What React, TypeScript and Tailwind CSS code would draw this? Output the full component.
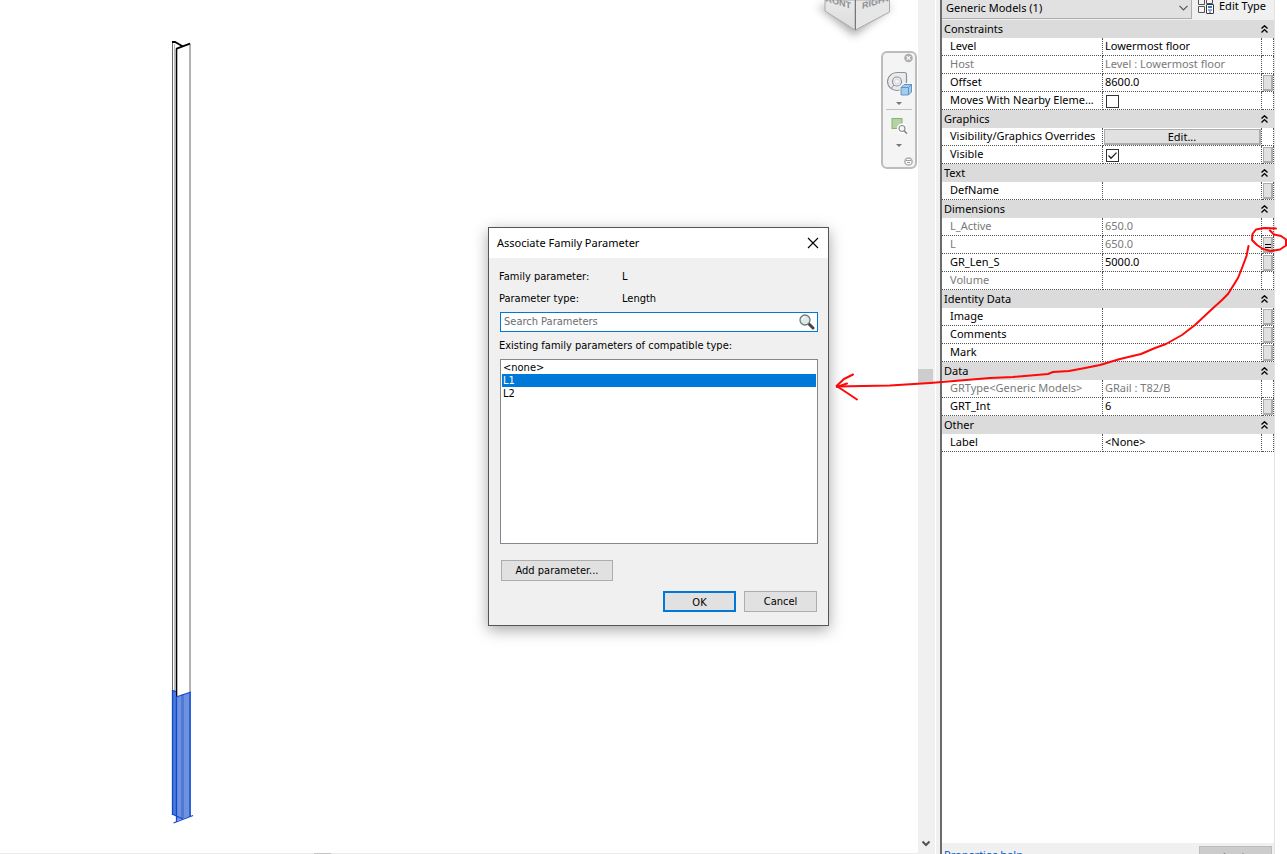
import { useState } from "react";

type Row = {
  name: string;
  value?: string;
  kind?: "text" | "check" | "button";
  checked?: boolean;
  muted?: boolean;
  assoc?: "blank" | "equals";
};

type Group = { title: string; rows: Row[] };

const groups: Group[] = [
  {
    title: "Constraints",
    rows: [
      { name: "Level", value: "Lowermost floor" },
      { name: "Host", value: "Level : Lowermost floor", muted: true },
      { name: "Offset", value: "8600.0", assoc: "blank" },
      { name: "Moves With Nearby Eleme...", kind: "check", checked: false },
    ],
  },
  {
    title: "Graphics",
    rows: [
      { name: "Visibility/Graphics Overrides", value: "Edit...", kind: "button" },
      { name: "Visible", kind: "check", checked: true, assoc: "blank" },
    ],
  },
  { title: "Text", rows: [{ name: "DefName", assoc: "blank" }] },
  {
    title: "Dimensions",
    rows: [
      { name: "L_Active", value: "650.0", muted: true },
      { name: "L", value: "650.0", muted: true, assoc: "equals" },
      { name: "GR_Len_S", value: "5000.0", assoc: "blank" },
      { name: "Volume", muted: true },
    ],
  },
  {
    title: "Identity Data",
    rows: [
      { name: "Image", assoc: "blank" },
      { name: "Comments", assoc: "blank" },
      { name: "Mark", assoc: "blank" },
    ],
  },
  {
    title: "Data",
    rows: [
      { name: "GRType<Generic Models>", value: "GRail : T82/B", muted: true },
      { name: "GRT_Int", value: "6", assoc: "blank" },
    ],
  },
  { title: "Other", rows: [{ name: "Label", value: "<None>" }] },
];

function CollapseIcon() {
  return (
    <svg width="7" height="8" viewBox="0 0 7 8" fill="none" stroke="#000" strokeWidth="1.4">
      <path d="M0.5 3.6 L3.5 0.8 L6.5 3.6 M0.5 7.4 L3.5 4.6 L6.5 7.4" />
    </svg>
  );
}

function PropertyRow({ row }: { row: Row }) {
  const tone = row.muted ? "text-[#7a7a7a]" : "text-black";
  return (
    <tr className="h-[18px]">
      <th
        scope="row"
        className={`border-r border-b border-dotted border-[#555] p-0 pl-2 text-left align-top font-normal whitespace-nowrap ${tone}`}
      >
        {row.name}
      </th>
      <td className={`border-r border-b border-dotted border-[#555] p-0 align-top ${tone}`}>
        {row.kind === "check" ? (
          <span className="flex h-4 items-end pl-[3px]">
            <span className="grid">
              <input
                type="checkbox"
                aria-label={row.name}
                defaultChecked={row.checked}
                className="peer col-start-1 row-start-1 size-[13px] appearance-none border border-[#333] bg-white"
              />
              <svg
                viewBox="0 0 13 13"
                className="pointer-events-none invisible col-start-1 row-start-1 size-[13px] peer-checked:visible"
                fill="none"
                stroke="#222"
                strokeWidth="1.3"
              >
                <path d="M2.5 6.5 L5 9.2 L10.5 3.6" />
              </svg>
            </span>
          </span>
        ) : row.kind === "button" ? (
          <button
            type="button"
            className="mx-px mt-px block h-4 w-[157px] border border-r-2 border-b-2 border-[#adadad] bg-[#e1e1e1] text-center leading-[13px]"
          >
            {row.value}
          </button>
        ) : (
          <span className="block pl-[2px]">{row.value}</span>
        )}
      </td>
      <td className="border-r border-b border-dotted border-[#555] p-0 align-top">
        {row.assoc && (
          <button
            type="button"
            aria-label={`Associate ${row.name}`}
            className="mt-px ml-px flex h-4 w-[10px] items-center justify-center border border-r-2 border-b-2 border-[#adadad] bg-[#e1e1e1] text-black"
          >
            {row.assoc === "equals" && (
              <svg width="6" height="5" viewBox="0 0 6 5" className="mt-1">
                <path d="M0 0.5 H6 M0 3.5 H6" stroke="#000" strokeWidth="1" />
              </svg>
            )}
          </button>
        )}
      </td>
    </tr>
  );
}

function PropertiesPanel() {
  return (
    <aside className="flex w-[334px] shrink-0 flex-col overflow-hidden border-l-2 border-[#6b6b6b] bg-white text-[11px] leading-[16px] text-black">
      <div className="flex h-5 shrink-0 bg-[#f0f0f0]">
        <div className="grid h-[19px] w-[250px] items-center">
          <select
            aria-label="Element filter"
            className="col-start-1 row-start-1 h-[19px] w-full appearance-none border-r border-b border-[#adadad] bg-[#e1e1e1] pb-[3px] pl-[4px]"
          >
            <option>Generic Models (1)</option>
          </select>
          <svg
            width="9"
            height="6"
            viewBox="0 0 9 6"
            className="pointer-events-none col-start-1 row-start-1 mr-1 mb-[3px] justify-self-end"
            fill="none"
            stroke="#555"
            strokeWidth="1.2"
          >
            <path d="M0.5 0.8 L4.5 4.8 L8.5 0.8" />
          </svg>
        </div>
        <button type="button" className="ml-[6px] flex h-4 items-start gap-[5px]">
          <svg width="16" height="14" viewBox="0 0 16 14" fill="none">
            <path d="M0.5 0 V4.5 H6.5 V0 M8.5 0 V3.5 H14.5 V0 M0.5 6.5 H6.5 V12.5 H0.5 Z" stroke="#555" fill="#f4f4f4" />
            <rect x="8.5" y="4.5" width="7" height="9" rx="0.5" stroke="#334" fill="#fff" />
            <rect x="10" y="6" width="4" height="2" fill="#1f7fd6" />
            <path d="M10 10 H14 M11 12 H13" stroke="#557" />
          </svg>
          <span className="leading-[12px]">Edit Type</span>
        </button>
      </div>
      <table className="w-full table-fixed border-separate border-spacing-0">
        <colgroup>
          <col className="w-[161px]" />
          <col />
          <col className="w-3" />
        </colgroup>
        {groups.map((group) => (
          <tbody key={group.title}>
            <tr className="h-[18px] bg-[#dbdbdb]">
              <th colSpan={3} scope="rowgroup" className="p-0 pr-[6px] pl-[2px] font-normal">
                <span className="flex items-center justify-between">
                  {group.title}
                  <button type="button" aria-label={`Collapse ${group.title}`}>
                    <CollapseIcon />
                  </button>
                </span>
              </th>
            </tr>
            {group.rows.map((row) => (
              <PropertyRow key={row.name} row={row} />
            ))}
          </tbody>
        ))}
      </table>
      <footer className="mt-auto flex h-[11px] shrink-0 items-start justify-between overflow-hidden bg-[#f0f0f0] pr-[2px] pl-[2px]">
        <a href="#help" className="mt-[4px] text-[#0058c8]">
          Properties help
        </a>
        <button type="button" disabled className="mt-[3px] h-[22px] w-[73px] border border-[#bcbcbc] bg-[#cccccc] text-[#838383]">
          Apply
        </button>
      </footer>
    </aside>
  );
}

function Rail() {
  return (
    <svg width="30" height="790" viewBox="168 38 30 790" className="absolute top-[38px] left-[168px]" fill="none">
      <path d="M172.5 42 V692 M190 44 V693" stroke="#666" />
      <path d="M174.5 44 V692" stroke="#bbb" />
      <path d="M176.5 49 V697" stroke="#000" strokeWidth="1.6" />
      <path d="M172 42 L175 42 L183 46.5 M176 48.8 L190 43.6" stroke="#000" strokeWidth="1.8" />
      <path d="M172 690 L176 691 V816 L172 814 Z" fill="#4a7ad6" />
      <path d="M176 697 L191 692 V816 L176 821 Z" fill="#6f92e0" />
      <path d="M181 695 L184 694 V818 L181 819 Z" fill="#5079d4" />
      <path d="M172.5 690 V815 M176.5 697 V822 M190 692 V817" stroke="#1248cc" strokeWidth="1.3" />
      <path d="M172 690.5 L176 691.5 M176 697 L191 692 M172 814 L183 819 M173.5 823 L193 815.5" stroke="#1248cc" strokeWidth="1.2" />
    </svg>
  );
}

function ViewCube() {
  return (
    <svg width="110" height="50" viewBox="0 0 110 50" className="absolute top-0 right-0">
      <defs>
        <linearGradient id="cubeFront" x1="0" y1="0" x2="0" y2="1">
          <stop offset="0" stopColor="#e9e9e9" />
          <stop offset="1" stopColor="#dcdcdc" />
        </linearGradient>
        <filter id="cubeShade" x="-30%" y="-60%" width="160%" height="220%">
          <feGaussianBlur stdDeviation="4" />
        </filter>
      </defs>
      <path d="M10 4 L47 34 L86 4 Z" fill="#777" opacity="0.6" filter="url(#cubeShade)" transform="translate(-1 2)" />
      <path d="M17 0 V11 L47 30 V0 Z" fill="url(#cubeFront)" stroke="#aaa" />
      <path d="M81.5 0 V12 L47.5 30 V0 Z" fill="#e6e6e6" stroke="#aaa" />
      <path d="M47.5 0 V30" stroke="#777" />
      <g fill="#8b8f94" fontFamily="Liberation Sans Narrow, Liberation Sans, sans-serif" fontSize="9" fontWeight="700">
        <text transform="translate(43 9) skewY(17)" textAnchor="end">FRONT</text>
        <text transform="translate(54 9) skewY(-17)">RIGHT</text>
      </g>
    </svg>
  );
}

function DropArrow() {
  return (
    <svg width="6" height="3" viewBox="0 0 6 3">
      <path d="M0 0 H6 L3 3 Z" fill="#777" />
    </svg>
  );
}

function NavigationBar() {
  return (
    <nav
      aria-label="Navigation bar"
      className="absolute top-[51px] right-[1px] flex h-[118px] w-9 flex-col items-center rounded-[6px] border-2 border-[#bcbcbc] bg-[#f4f4f4]"
    >
      <button type="button" aria-label="Close navigation bar" className="mr-[2px] self-end">
        <svg width="9" height="10" viewBox="0 0 9 10" fill="none">
          <circle cx="4.5" cy="5" r="4.3" fill="#adadad" />
          <path d="M2.7 3.2 L6.3 6.8 M6.3 3.2 L2.7 6.8" stroke="#fff" strokeWidth="1.2" />
        </svg>
      </button>
      <button type="button" aria-label="Steering wheel" className="mt-2 ml-px">
        <svg width="26" height="26" viewBox="0 0 26 26" fill="none">
          <path d="M10 1.5 H17.5 Q19.5 1.5 19.5 3.5 V11 A9.5 9 0 1 1 10 1.5 Z" fill="#e9eaec" stroke="#8e9299" strokeWidth="1.2" />
          <circle cx="10" cy="10.5" r="4.5" fill="#f3f3f3" stroke="#8e9299" strokeWidth="1.2" />
          <circle cx="10" cy="10.5" r="2.5" stroke="#d2d4d8" />
          <path d="M7 14 L4 17.5" stroke="#8e9299" />
          <path d="M14 16.5 L17 13.5 H24.5 V21 L21.5 24 H14 Z" fill="#a9cbea" stroke="#fff" strokeWidth="2.5" />
          <path d="M14 16.5 L17 13.5 H24.5 V21 L21.5 24 H14 Z M14 16.5 H21.5 V24 M21.5 16.5 L24.5 13.5" fill="#a9cbea" stroke="#5b93c9" strokeLinejoin="round" />
        </svg>
      </button>
      <button type="button" aria-label="Steering wheel options" className="mt-[3px] flex h-[6px] items-center">
        <DropArrow />
      </button>
      <hr className="mt-[3px] w-[26px] border-[#c2c2c2]" />
      <button type="button" aria-label="Zoom region" className="mt-2">
        <svg width="17" height="17" viewBox="0 0 17 17" fill="none">
          <rect x="1" y="0.5" width="10" height="10" fill="#b6d1a4" stroke="#84b56f" />
          <path d="M12 12 L16 15.5" stroke="#fff" strokeWidth="4" />
          <circle cx="11" cy="10.5" r="3.5" fill="#f8f8f8" stroke="#fff" strokeWidth="3" />
          <path d="M13 12.7 L16 15.7" stroke="#8e8e8e" strokeWidth="1.8" />
          <circle cx="11" cy="10.5" r="3" fill="#f4f4f4" stroke="#8e8e8e" strokeWidth="1.2" />
        </svg>
      </button>
      <button type="button" aria-label="Zoom options" className="mt-[7px] flex h-[6px] items-center">
        <DropArrow />
      </button>
      <button type="button" aria-label="Customize navigation bar" className="mt-auto mr-[2px] mb-px self-end">
        <svg width="9" height="9" viewBox="0 0 9 9" fill="none">
          <circle cx="4.5" cy="4.5" r="3.6" stroke="#adadad" strokeWidth="1.5" fill="#fff" />
          <path d="M2 3.5 H7 M3 5.5 H6" stroke="#9c9c9c" />
        </svg>
      </button>
    </nav>
  );
}

function AssociateDialog() {
  const options = ["<none>", "L1", "L2"];
  const [selected, setSelected] = useState("L1");
  const button = "h-[21px] bg-[#e1e1e1] pt-[2px] text-center";
  return (
    <section
      role="dialog"
      aria-labelledby="dialog-title"
      className="absolute top-[227px] left-[488px] w-[341px] border border-[#555] bg-[#f0f0f0] text-[11px] text-black shadow-[0_4px_14px_rgba(0,0,0,0.35)]"
    >
      <header className="flex h-[30px] items-center justify-between bg-white pr-[9px] pl-2">
        <h1 id="dialog-title">Associate Family Parameter</h1>
        <button type="button" aria-label="Close">
          <svg width="12" height="12" viewBox="0 0 12 12" stroke="#000" strokeWidth="1.1">
            <path d="M1 1 L11 11 M11 1 L1 11" />
          </svg>
        </button>
      </header>
      <div className="flex flex-col pt-2 pr-[10px] pb-[13px] pl-[11px] font-['DejaVu_Sans_Condensed','DejaVu_Sans',sans-serif]">
        <dl className="-ml-px grid grid-cols-[123px_1fr] leading-[22px]">
          <dt>Family parameter:</dt>
          <dd>L</dd>
          <dt>Parameter type:</dt>
          <dd>Length</dd>
        </dl>
        <label className="mt-[2px] flex h-5 items-center border border-[#0078d7] bg-white pr-[2px] pl-[3px]">
          <input
            type="text"
            autoFocus
            aria-label="Search Parameters"
            placeholder="Search Parameters"
            className="min-w-0 flex-1 caret-black outline-none placeholder:text-[#6d6d6d] placeholder:opacity-100"
          />
          <svg width="16" height="16" viewBox="0 0 16 16" fill="none">
            <path d="M9.5 9.5 L14 14" stroke="#444" strokeWidth="3" strokeLinecap="round" />
            <circle cx="6" cy="6" r="5" fill="#dcebee" stroke="#777" strokeWidth="1.3" />
            <path d="M3 6 A3 3 0 0 1 6 3" stroke="#fff" />
          </svg>
        </label>
        <h2 id="param-list" className="-ml-px leading-[27px]">
          Existing family parameters of compatible type:
        </h2>
        <ul role="listbox" aria-labelledby="param-list" className="h-[185px] border border-[#828790] bg-white p-px leading-[13px]">
          {options.map((option) => (
            <li
              key={option}
              role="option"
              aria-selected={option === selected}
              onClick={() => setSelected(option)}
              className="px-px aria-selected:bg-[#0078d7] aria-selected:text-white"
            >
              {option}
            </li>
          ))}
        </ul>
        <button type="button" className={`${button} mt-4 ml-px w-28 border border-[#adadad]`}>
          Add parameter...
        </button>
        <div className="mt-[10px] mr-px flex justify-end gap-2">
          <button type="button" className={`${button} w-[73px] border-2 border-[#0078d7]`}>
            OK
          </button>
          <button type="button" className={`${button} w-[73px] border border-[#adadad]`}>
            Cancel
          </button>
        </div>
      </div>
    </section>
  );
}

function Markup() {
  return (
    <svg
      width="460"
      height="180"
      viewBox="828 224 460 180"
      className="pointer-events-none absolute top-[224px] left-[828px]"
      fill="none"
      stroke="#fe0808"
      strokeWidth="2"
      strokeLinecap="round"
      strokeLinejoin="round"
    >
      <path d="M1248.5 246 L1246.5 256 L1242 268 L1238 278 L1228 294 L1222 300 L1211 310 L1195 325 L1182 335 L1166 344 L1155 348 L1141 354 L1120 359 L1100 365 L1085 368 L1069 371 L1053 372 L1048 374 L1013 377 L990 378 L960 380.5 L930 383 L890 385.5 L837 386.5" />
      <path d="M853 374.5 L844 379 L836.5 386 L845 391.5 L857 399.5 M837 387 L847 383.5" />
      <path d="M1276 228.5 L1264 228 L1256 229.5 L1252.5 234 L1252 240 L1257 245 L1263 249 L1271 251 L1280 249.5 L1286 245.5 L1286 239.5 L1281 236 L1274 234.5 L1270 230.5" />
    </svg>
  );
}

export default function App() {
  return (
    <div className="relative flex h-screen overflow-hidden bg-white font-['Noto_Sans','Open_Sans',sans-serif]">
      <main className="flex min-w-0 flex-1 flex-col">
        <div className="relative min-h-0 flex-1">
          <Rail />
          <ViewCube />
          <NavigationBar />
        </div>
        <div className="h-px bg-[#ebebeb]">
          <div className="ml-[314px] h-px w-[17px] bg-[#c4c4c4]" />
        </div>
      </main>
      <div className="flex w-[17px] shrink-0 flex-col items-center bg-[#f0f0f0]">
        <div className="mt-[369px] h-[15px] w-[15px] self-start bg-[#cdcdcd]" />
        <svg width="8" height="7" viewBox="0 0 8 7" className="mt-auto mr-[2px] mb-[7px]" fill="none" stroke="#555" strokeWidth="2">
          <path d="M0.5 1.5 L4 5 L7.5 1.5" />
        </svg>
      </div>
      <div className="w-[5px] shrink-0 border-l border-white bg-[#f0f0f0]" />
      <PropertiesPanel />
      <div className="w-[13px] shrink-0 border-l border-[#e3e3e3] bg-white" />
      <AssociateDialog />
      <Markup />
    </div>
  );
}
